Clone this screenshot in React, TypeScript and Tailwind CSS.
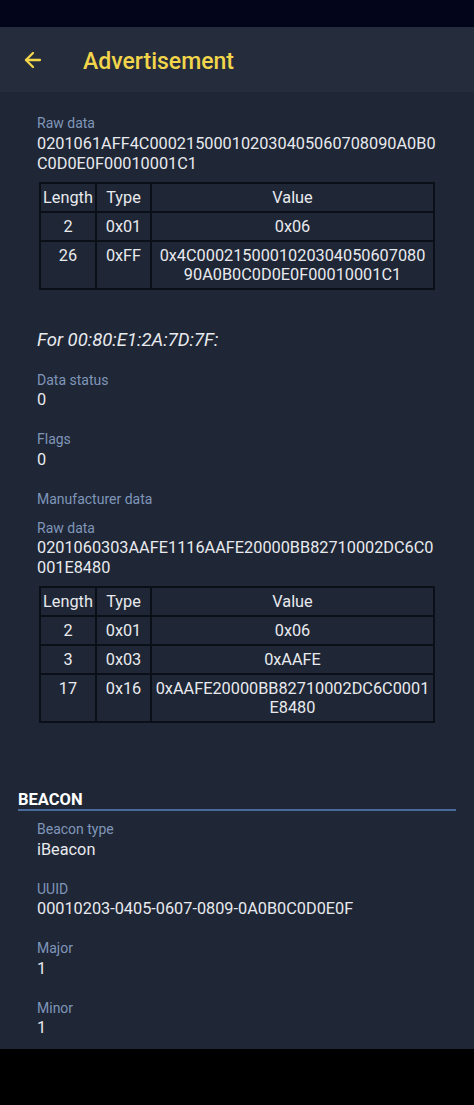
import { ArrowLeft } from "lucide-react";

type Row = { length: string; type: string; value: string };

const advRows: Row[] = [
  { length: "2", type: "0x01", value: "0x06" },
  { length: "26", type: "0xFF", value: "0x4C000215000102030405060708090A0B0C0D0E0F00010001C1" },
];

const mfrRows: Row[] = [
  { length: "2", type: "0x01", value: "0x06" },
  { length: "3", type: "0x03", value: "0xAAFE" },
  { length: "17", type: "0x16", value: "0xAAFE20000BB82710002DC6C0001E8480" },
];

const Field = ({ label, value }: { label: string; value: string }) => (
  <div>
    <div className="text-[14px] leading-[20.5px] text-[#7f96b9]">{label}</div>
    <div className="text-[16.3px] leading-5 text-[#e8eaee] break-all">{value}</div>
  </div>
);

const RecordTable = ({ rows }: { rows: Row[] }) => (
  <table className="ml-[2px] w-[396px] border-collapse text-[16.3px] leading-[19px] text-[#e8eaee]">
    <thead>
      <tr>
        <th className="w-[56px] border-2 border-[#0b0f18] py-1 font-normal">Length</th>
        <th className="w-[55px] border-2 border-[#0b0f18] py-1 font-normal">Type</th>
        <th className="border-2 border-[#0b0f18] py-1 font-normal">Value</th>
      </tr>
    </thead>
    <tbody>
      {rows.map((r) => (
        <tr key={r.type}>
          <td className="border-2 border-[#0b0f18] py-1 text-center align-top">{r.length}</td>
          <td className="border-2 border-[#0b0f18] py-1 text-center align-top">{r.type}</td>
          <td className="border-2 border-[#0b0f18] py-1 align-top">
            <div className="mx-auto w-[274px] text-center break-all">{r.value}</div>
          </td>
        </tr>
      ))}
    </tbody>
  </table>
);

export default function App() {
  return (
    <div
      className="flex h-[1105px] w-[474px] flex-col bg-black"
      style={{ fontFamily: "Roboto, 'Noto Sans', sans-serif" }}
    >
      <div className="h-[27px] bg-[#03051a]" />
      <header className="flex h-[65px] items-center bg-[#252d3d] pl-[21px]">
        <ArrowLeft className="h-[24px] w-[24px] text-[#f2d54a]" strokeWidth={2.3} />
        <h1 className="ml-[38px] pt-[5px] text-[23px] font-medium text-[#f2d54a]">Advertisement</h1>
      </header>

      <main className="flex h-[957px] flex-col bg-[#1f2636]">
        <div className="px-[37px] pt-[21px]">
          <Field label="Raw data" value="0201061AFF4C000215000102030405060708090A0B0C0D0E0F00010001C1" />
          <div className="mt-[8px]">
            <RecordTable rows={advRows} />
          </div>

          <p className="mt-[38px] text-[18.5px] italic leading-6 text-[#e8eaee]">For 00:80:E1:2A:7D:7F:</p>

          <div className="mt-[18px] flex flex-col gap-[19px]">
            <Field label="Data status" value="0" />
            <Field label="Flags" value="0" />
            <div>
              <div className="text-[14px] leading-5 text-[#7f96b9]">Manufacturer data</div>
              <div className="mt-[9px]">
                <Field label="Raw data" value="0201060303AAFE1116AAFE20000BB82710002DC6C0001E8480" />
              </div>
              <div className="mt-[8px]">
                <RecordTable rows={mfrRows} />
              </div>
            </div>
          </div>
        </div>

        <section className="mt-[68px] px-[18px]">
          <h2 className="border-b-2 border-[#4a6a9c] text-[16.5px] font-bold leading-[18px] text-white">
            BEACON
          </h2>
          <div className="mt-[8px] flex flex-col gap-[19px] px-[19px]">
            <Field label="Beacon type" value="iBeacon" />
            <Field label="UUID" value="00010203-0405-0607-0809-0A0B0C0D0E0F" />
            <Field label="Major" value="1" />
            <Field label="Minor" value="1" />
          </div>
        </section>
      </main>
    </div>
  );
}
